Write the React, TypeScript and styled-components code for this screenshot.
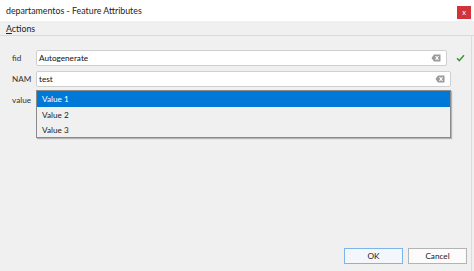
import React from "react";
import styled, { createGlobalStyle } from "styled-components";

const Global = createGlobalStyle`
  html, body { margin: 0; padding: 0; background: #f0f0f0; }
  body { font-family: Lato, "Noto Sans", sans-serif; font-size: 8.2px; color: #1a1a1a; }
  * { box-sizing: border-box; }
`;

const Window = styled.div`
  width: 474px;
  height: 271px;
  display: flex;
  flex-direction: column;
  background: #f0f0f0;
  overflow: hidden;
`;

const TitleBar = styled.div`
  height: 21px;
  background: #ffffff;
  display: flex;
  align-items: center;
  justify-content: space-between;
  padding: 0 3px 0 6px;
`;

const Title = styled.span`
  font-size: 8.8px;
  color: #222;
  line-height: 1;
  padding-top: 1px;
`;

const CloseBtn = styled.div`
  width: 14px;
  height: 13px;
  background: #d13438;
  color: #fff;
  font-size: 7.5px;
  display: flex;
  align-items: center;
  justify-content: center;
  line-height: 1;
  margin-top: 4px;
`;

const MenuBar = styled.div`
  height: 15px;
  border-bottom: 1px solid #dadada;
  display: flex;
  align-items: center;
  padding-left: 6px;
  background: #f0f0f0;
`;

const MenuItem = styled.span`
  font-size: 8.8px;
  color: #222;
  u { text-decoration: underline; }
`;

const Body = styled.div`
  flex: 1;
  display: flex;
  flex-direction: column;
  border-right: 1px solid #dcdcdc;
  margin-right: 2px;
  padding: 14px 0 0 12px;
`;

const Form = styled.div`
  display: grid;
  grid-template-columns: 24px 415px 14px;
  row-gap: 5px;
  align-items: center;
`;

const Label = styled.span`
  font-size: 8.2px;
  color: #333;
`;

const InputBox = styled.div<{ $w: number }>`
  height: 16px;
  width: ${(p) => p.$w}px;
  background: #fff;
  border: 1px solid #cfcfcf;
  border-radius: 2px;
  display: flex;
  align-items: center;
  justify-content: space-between;
  padding: 0 5px 0 2px;
  font-size: 8.2px;
  color: #111;
`;

const Check = styled.svg`
  margin-left: 5px;
`;

const ComboWrap = styled.div`
  position: relative;
  height: 16px;
  width: 415px;
`;

const Popup = styled.ul`
  position: absolute;
  top: -2px;
  left: 0;
  width: 415px;
  margin: 0;
  padding: 0;
  list-style: none;
  background: #f0f0f0;
  border: 1px solid #8a8a8a;
  box-shadow: 1px 1px 1px rgba(0, 0, 0, 0.25);
  z-index: 2;
`;

const Option = styled.li<{ $sel?: boolean }>`
  height: ${(p) => (p.$sel ? 16 : 15)}px;
  display: flex;
  align-items: center;
  padding-left: 5px;
  font-size: 8.2px;
  color: ${(p) => (p.$sel ? "#ffffff" : "#222")};
  background: ${(p) => (p.$sel ? "#0078d7" : "transparent")};
`;

const Footer = styled.div`
  display: flex;
  justify-content: flex-end;
  gap: 5px;
  padding: 0 4px 7px 0;
  margin-top: auto;
`;

const Button = styled.button<{ $default?: boolean }>`
  width: 59px;
  height: 16px;
  font-family: inherit;
  font-size: 8.2px;
  color: #222;
  padding: 0;
  border-radius: 0;
  border: 1px solid ${(p) => (p.$default ? "#7fb4ea" : "#b4b4b4")};
  background: ${(p) => (p.$default ? "#f3f7fc" : "#fbfbfb")};
`;

const ClearIcon = () => (
  <svg width="10" height="8" viewBox="0 0 10 8">
    <path d="M3 0.5 H9.5 V7.5 H3 L0.5 4 Z" fill="#9a9a9a" />
    <path d="M4.5 2.2 L7.5 5.8 M7.5 2.2 L4.5 5.8" stroke="#fff" strokeWidth="1.1" />
  </svg>
);

export default function App() {
  return (
    <>
      <Global />
      <Window>
        <TitleBar>
          <Title>departamentos - Feature Attributes</Title>
          <CloseBtn>x</CloseBtn>
        </TitleBar>
        <MenuBar>
          <MenuItem>
            <u>A</u>ctions
          </MenuItem>
        </MenuBar>
        <Body>
          <Form>
            <Label>fid</Label>
            <InputBox $w={411}>
              <span>Autogenerate</span>
              <ClearIcon />
            </InputBox>
            <Check width="9" height="8" viewBox="0 0 9 8">
              <path d="M1 4.3 L3.3 6.6 L8 1.2" stroke="#3c9a3c" strokeWidth="1.5" fill="none" />
            </Check>
            <Label>NAM</Label>
            <InputBox $w={415}>
              <span>test</span>
              <ClearIcon />
            </InputBox>
            <span />
            <Label>value</Label>
            <ComboWrap>
              <Popup>
                <Option $sel>Value 1</Option>
                <Option>Value 2</Option>
                <Option>Value 3</Option>
              </Popup>
            </ComboWrap>
            <span />
          </Form>
          <Footer>
            <Button $default>OK</Button>
            <Button>Cancel</Button>
          </Footer>
        </Body>
      </Window>
    </>
  );
}
